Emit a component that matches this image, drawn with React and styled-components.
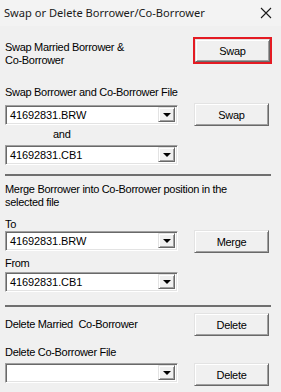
import React from "react"
import styled, { createGlobalStyle } from "styled-components"

const Global = createGlobalStyle`
  html, body {
    margin: 0;
    padding: 0;
    background: #f0f0f0;
  }
  * {
    box-sizing: border-box;
  }
`

const Window = styled.div`
  width: 281px;
  height: 392px;
  overflow: hidden;
  background: #f0f0f0;
  font-family: "Liberation Sans", Arial, sans-serif;
  font-size: 11px;
  letter-spacing: -0.3px;
  color: #000;
`

const TitleBar = styled.div`
  height: 26px;
  background: #f3f3f3;
  display: flex;
  align-items: center;
  justify-content: space-between;
  padding: 0 8px 0 4px;
`

const Title = styled.span`
  font-family: "Noto Sans", "Open Sans", sans-serif;
  font-size: 11.1px;
  letter-spacing: 0;
  color: #1a1a1a;
  margin-top: -1px;
`

const Close = styled.div`
  width: 14px;
  height: 14px;
  display: flex;
  align-items: center;
  justify-content: center;
`

const Body = styled.div`
  padding: 0 0 0 5px;
`

const Section = styled.div`
  display: flex;
  flex-direction: column;
  padding-top: ${p => p.$top || 0}px;
`

const Row = styled.div`
  display: grid;
  grid-template-columns: 173px 75px;
  column-gap: 16px;
  align-items: start;
  margin-top: ${p => p.$mt || 0}px;
`

const Label = styled.div`
  line-height: 13px;
  white-space: nowrap;
  margin-top: ${p => p.$mt || 0}px;
  padding-left: ${p => p.$indent || 0}px;
`

const Button = styled.button`
  display: block;
  width: 75px;
  height: 23px;
  margin: 0;
  margin-top: ${p => p.$mt || 0}px;
  padding: 0;
  background: #f0f0f0;
  font-family: "Liberation Sans", Arial, sans-serif;
  font-size: 11px;
  letter-spacing: -0.3px;
  color: #000;
  border: 1px solid;
  border-color: #e3e3e3 #696969 #696969 #e3e3e3;
  box-shadow: inset 1px 1px #ffffff, inset -1px -1px #a0a0a0;
`

const RedFrame = styled.div`
  border: 2px solid #e41b23;
  margin: ${p => p.$mt || 0}px 0 0 -1px;
  width: 79px;
`

const Combo = styled.div`
  width: 173px;
  height: 20px;
  margin-top: ${p => p.$mt || 0}px;
  display: flex;
  align-items: stretch;
  background: #fff;
  border: 1px solid;
  border-color: #a0a0a0 #ffffff #ffffff #a0a0a0;
  box-shadow: inset 1px 1px #696969, inset -1px -1px #e3e3e3;
  padding: 1px 2px 2px 2px;
`

const ComboText = styled.div`
  flex: 1;
  padding-left: 2px;
  line-height: 16px;
  font-size: 11px;
  letter-spacing: -0.1px;
  white-space: nowrap;
  overflow: hidden;
`

const DropButton = styled.div`
  width: 17px;
  background: #f0f0f0;
  border: 1px solid;
  border-color: #e3e3e3 #696969 #696969 #e3e3e3;
  box-shadow: inset 1px 1px #ffffff, inset -1px -1px #a0a0a0;
  display: flex;
  align-items: center;
  justify-content: center;
`

const Arrow = styled.div`
  width: 0;
  height: 0;
  border-left: 4px solid transparent;
  border-right: 4px solid transparent;
  border-top: 4px solid #000;
  margin-top: 1px;
`

const Separator = styled.div`
  width: 266px;
  height: 2px;
  background: #6f6f6f;
  margin-top: ${p => p.$mt || 0}px;
`

const ComboBox = ({ value, mt }) => (
  <Combo $mt={mt}>
    <ComboText>{value}</ComboText>
    <DropButton>
      <Arrow />
    </DropButton>
  </Combo>
)

export default function App() {
  return (
    <Window>
      <Global />
      <TitleBar>
        <Title>Swap or Delete Borrower/Co-Borrower</Title>
        <Close>
          <svg width="12" height="12" viewBox="0 0 12 12">
            <path d="M1 1 L11 11 M11 1 L1 11" stroke="#1a1a1a" strokeWidth="1.1" fill="none" />
          </svg>
        </Close>
      </TitleBar>
      <Body>
        <Row $mt={11}>
          <Label $mt={4}>
            Swap Married Borrower &amp;
            <br />
            Co-Borrower
          </Label>
          <RedFrame>
            <Button>Swap</Button>
          </RedFrame>
        </Row>

        <Section $top={19}>
          <Label>Swap Borrower and Co-Borrower File</Label>
          <Row $mt={4}>
            <ComboBox value="41692831.BRW" mt={2} />
            <Button>Swap</Button>
          </Row>
          <Label $mt={2} $indent={48}>and</Label>
          <ComboBox value="41692831.CB1" mt={4} />
          <Separator $mt={9} />
        </Section>

        <Section $top={7}>
          <Label>
            Merge Borrower into Co-Borrower position in the
            <br />
            selected file
          </Label>
          <Label $mt={9}>To</Label>
          <Row>
            <ComboBox value="41692831.BRW" mt={0} />
            <Button $mt={-1}>Merge</Button>
          </Row>
          <Label $mt={4}>From</Label>
          <ComboBox value="41692831.CB1" mt={2} />
          <Separator $mt={13} />
        </Section>

        <Section $top={6}>
          <Row>
            <Label $mt={5}>Delete Married&nbsp; Co-Borrower</Label>
            <Button>Delete</Button>
          </Row>
          <Label $mt={10}>Delete Co-Borrower File</Label>
          <Row $mt={4}>
            <ComboBox value="" mt={0} />
            <Button>Delete</Button>
          </Row>
        </Section>
      </Body>
    </Window>
  )
}
